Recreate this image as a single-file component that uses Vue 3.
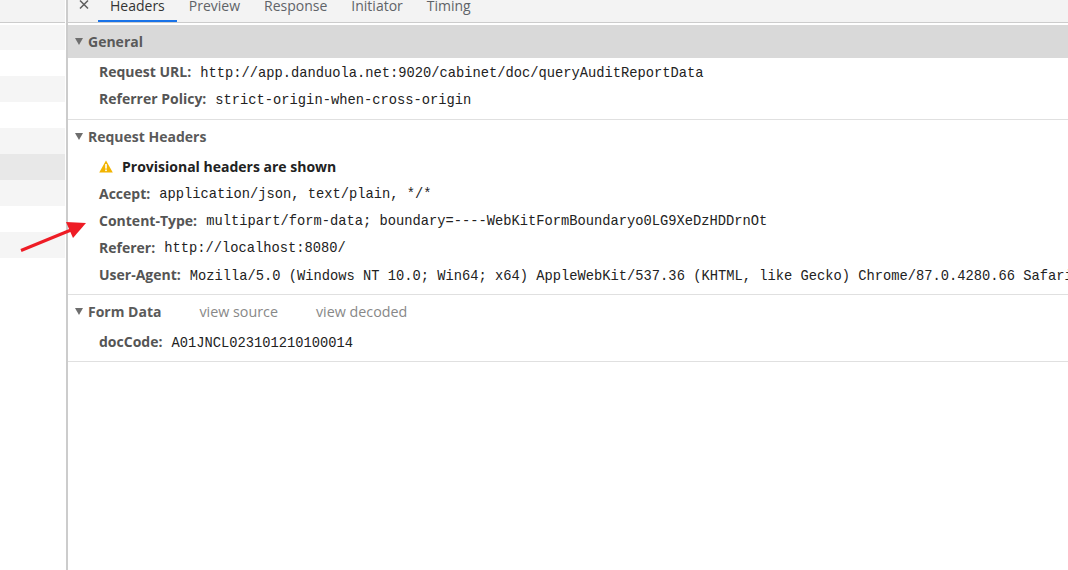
<script setup>
const stripes = ['g','w','g','w','g','s','g','w','g']
const tabs = ['Headers','Preview','Response','Initiator','Timing']
const general = [['Request URL:','http://app.danduola.net:9020/cabinet/doc/queryAuditReportData'],['Referrer Policy:','strict-origin-when-cross-origin']]
const headers = [['Accept:','application/json, text/plain, */*'],['Content-Type:','multipart/form-data; boundary=----WebKitFormBoundaryo0LG9XeDzHDDrnOt'],['Referer:','http://localhost:8080/'],['User-Agent:','Mozilla/5.0 (Windows NT 10.0; Win64; x64) AppleWebKit/537.36 (KHTML, like Gecko) Chrome/87.0.4280.66 Safari/537.36']]
</script>

<template>
  <div class="page">
    <aside class="list">
      <div class="list-head"></div>
      <div v-for="(s, i) in stripes" :key="i" class="stripe" :class="s"></div>
    </aside>
    <main class="detail">
      <nav class="tabs">
        <span class="close"><svg width="10" height="10" viewBox="0 0 10 10"><path d="M1 0.5 L9 8.5 M9 0.5 L1 8.5" stroke="#5f5f5f" stroke-width="1.5" fill="none"/></svg></span>
        <span v-for="(t, i) in tabs" :key="t" class="tab" :class="{ active: i === 0 }">{{ t }}</span>
      </nav>
      <section class="sec first">
        <h3 class="title grey"><i class="tri"></i>General</h3>
        <div v-for="r in general" :key="r[0]" class="row"><b>{{ r[0] }}</b><code>{{ r[1] }}</code></div>
      </section>
      <section class="sec">
        <h3 class="title"><i class="tri"></i>Request Headers</h3>
        <div class="row warn">
          <svg width="14" height="13" viewBox="0 0 14 13"><path d="M7 0.5 L13.8 12.5 H0.2 Z" fill="#f2b400"/><rect x="6.2" y="4" width="1.6" height="4.6" fill="#fff"/><rect x="6.2" y="9.5" width="1.6" height="1.6" fill="#fff"/></svg>
          <strong>Provisional headers are shown</strong>
        </div>
        <div v-for="r in headers" :key="r[0]" class="row"><b>{{ r[0] }}</b><code>{{ r[1] }}</code></div>
      </section>
      <section class="sec">
        <h3 class="title"><i class="tri"></i>Form Data<span class="lnk">view source</span><span class="lnk">view decoded</span></h3>
        <div class="row"><b>docCode:</b><code>A01JNCL023101210100014</code></div>
      </section>
    </main>
    <svg class="arrow" width="70" height="32" viewBox="0 0 70 32"><path d="M2 28.5 L52 8" stroke="#ee1c25" stroke-width="3" fill="none"/><path d="M67 1 L47 0 L54 16 Z" fill="#ee1c25"/></svg>
  </div>
</template>

<style>
html, body { margin: 0; background: #fff; overflow: hidden; }
</style>
<style scoped>
.page { position: relative; display: flex; width: 1068px; height: 570px; overflow: hidden; font-family: "Open Sans", sans-serif; font-size: 14px; color: #5a5a5a; }
.list { width: 65px; flex: none; margin-right: 1px; }
.list-head { height: 22px; background: #f3f3f3; border-bottom: 1px solid #ccc; margin-bottom: 2px; }
.stripe { height: 26px; }
.stripe:nth-child(2) { height: 25px; }
.stripe.g { background: #f5f5f5; }
.stripe.w { background: #fff; }
.stripe.s { background: #e8e8e8; }
.detail { flex: 1; min-width: 0; border-left: 2px solid #ccc; overflow: hidden; }
.tabs { height: 22px; display: flex; background: #f3f3f3; border-bottom: 1px solid #ccc; overflow: hidden; }
.close { width: 30px; padding-left: 11px; box-sizing: border-box; line-height: 0; }
.tab { height: 22px; line-height: 11px; padding: 0 12px; color: #5f6368; box-sizing: border-box; font-size: 14px; }
.tab.active { border-bottom: 2px solid #1a73e8; color: #333; }
.sec { border-bottom: 1px solid #e0e0e0; padding-bottom: 6px; }
.sec.first { margin-top: 2px; padding-bottom: 7px; }
.title { margin: 0; height: 33px; box-sizing: border-box; font-size: 14px; font-weight: 700; color: #5a5a5a; padding-left: 7px; display: flex; align-items: center; }
.title.grey { background: #d9d9d9; }
.tri { width: 0; height: 0; border-left: 4.5px solid transparent; border-right: 4.5px solid transparent; border-top: 7px solid #6e6e6e; margin-right: 5px; }
.row { height: 27px; padding-left: 31px; display: flex; align-items: center; white-space: nowrap; }
.row b { font-weight: 700; color: #555; margin-right: 9px; }
.row code { font-family: "Liberation Mono", monospace; font-size: 13.75px; color: #222; margin-top: 2px; }
.first .row code, .sec .row:last-child code { margin-top: 4px; }
.warn strong { font-weight: 700; color: #222; margin-left: 9px; }
.lnk { font-weight: 400; font-size: 14.3px; color: #888; margin-left: 38px; }
.arrow { position: absolute; left: 19px; top: 222px; }
</style>
